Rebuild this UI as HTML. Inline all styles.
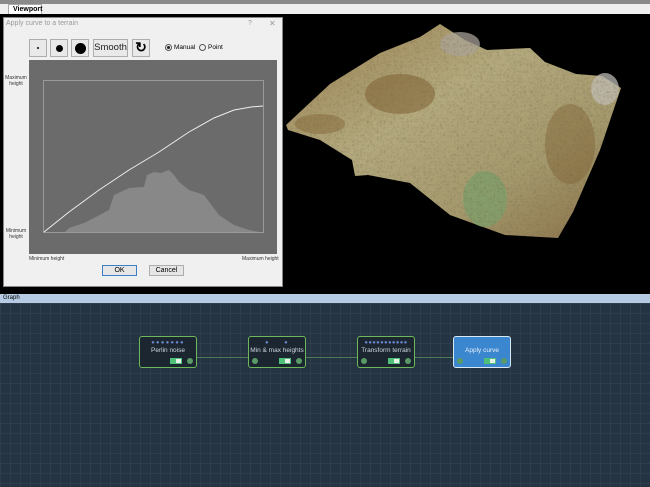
<!DOCTYPE html>
<html><head><style>
*{margin:0;padding:0;box-sizing:border-box}
body{width:650px;height:487px;overflow:hidden;background:#000;font-family:"Liberation Sans",sans-serif;position:relative}
.abs{position:absolute}
.btn{position:absolute;top:39px;height:18px;background:#e9e9e9;border:1px solid #adadad}
.node{position:absolute;top:336px;width:58px;height:32px;background:#1c2631;border:1.5px solid #6cb85a;border-radius:3px}
.node .t{position:absolute;top:10px;width:100%;text-align:center;color:#cfd6dc;font-size:6.5px}
.node .sw{position:absolute;left:30px;top:21px;width:12px;height:6px;background:#4fc07a}
.node .sw:after{content:"";position:absolute;right:1px;top:1px;width:5px;height:4px;background:#e8f0e8}
.node .pi{position:absolute;left:3px;top:21px;width:6px;height:6px;border-radius:50%;background:#5a9a66}
.node .po{position:absolute;right:3px;top:21px;width:6px;height:6px;border-radius:50%;background:#5a9a66}
.dots{position:absolute;top:3px;width:100%;text-align:center;color:#6a82c8;font-size:6px;letter-spacing:1.2px;line-height:6px}
</style></head><body>
<div class="abs" style="left:0;top:0;width:650px;height:4px;background:#8a8a8a"></div>
<div class="abs" style="left:0;top:4px;width:650px;height:10px;background:#efefef"></div>
<div class="abs" style="left:8px;top:4px;width:34px;height:10px;background:#fff;border:1px solid #aaa;border-bottom:none;font-size:7px;font-weight:bold;padding-left:4px;line-height:9px">Viewport</div>
<svg class="abs" style="left:0;top:14px" width="650" height="278">
<defs><linearGradient id="g" x1="0" y1="0" x2="1" y2="1"><stop offset="0" stop-color="#9a8050"/><stop offset="0.4" stop-color="#b8ae82"/><stop offset="0.7" stop-color="#a89c70"/><stop offset="1" stop-color="#8a7048"/></linearGradient>
<filter id="n"><feTurbulence baseFrequency="0.3" numOctaves="2" seed="3"/><feColorMatrix values="0 0 0 0 0.15  0 0 0 0 0.12  0 0 0 0 0.05  0 0 0 0.45 0"/><feComposite in2="SourceGraphic" operator="in"/></filter></defs>
<polygon points="286,111 330,70 380,39 420,23 440,10 465,26 487,36 530,34 545,48 576,60 602,62 621,74 600,136 573,198 558,224 505,221 450,201 410,169 368,161 355,162 352,146 320,126 288,116" fill="url(#g)"/>
<ellipse cx="485" cy="185" rx="22" ry="28" fill="#7fa36e" opacity="0.8"/>
<ellipse cx="460" cy="30" rx="20" ry="12" fill="#b0aaa0" opacity="0.7"/>
<ellipse cx="605" cy="75" rx="14" ry="16" fill="#c8c5c0" opacity="0.7"/>
<ellipse cx="400" cy="80" rx="35" ry="20" fill="#7a5a2a" opacity="0.5"/>
<ellipse cx="320" cy="110" rx="25" ry="10" fill="#7a5a2a" opacity="0.4"/>
<ellipse cx="570" cy="130" rx="25" ry="40" fill="#7a5a2a" opacity="0.4"/>
<polygon points="286,111 330,70 380,39 420,23 440,10 465,26 487,36 530,34 545,48 576,60 602,62 621,74 600,136 573,198 558,224 505,221 450,201 410,169 368,161 355,162 352,146 320,126 288,116" fill="#000" filter="url(#n)"/>
</svg>
<div class="abs" style="left:3px;top:17px;width:280px;height:270px;background:#f0f0f0;border:1px solid #888"></div>
<div class="abs" style="left:6px;top:20px;font-size:7px;color:#999">Apply curve to a terrain</div>
<div class="abs" style="left:248px;top:20px;font-size:7px;color:#999">?</div>
<div class="abs" style="left:269px;top:19px;font-size:8px;color:#999">✕</div>
<div class="btn" style="left:29px;width:18px"><div class="abs" style="left:7px;top:7px;width:2px;height:2px;background:#000;border-radius:50%"></div></div>
<div class="btn" style="left:50px;width:18px"><div class="abs" style="left:5px;top:5px;width:7px;height:7px;background:#000;border-radius:50%"></div></div>
<div class="btn" style="left:71px;width:18px"><div class="abs" style="left:3px;top:3px;width:11px;height:11px;background:#000;border-radius:50%"></div></div>
<div class="btn" style="left:93px;width:35px;font-size:9.5px;text-align:center;line-height:16px;color:#222">Smooth</div>
<div class="btn" style="left:132px;width:18px;font-size:14px;text-align:center;line-height:15px;font-weight:bold">↻</div>
<div class="abs" style="left:165px;top:44px;width:7px;height:7px;border:1px solid #555;border-radius:50%"><div class="abs" style="left:1px;top:1px;width:3px;height:3px;background:#222;border-radius:50%"></div></div>
<div class="abs" style="left:174px;top:44px;font-size:6.5px">Manual</div>
<div class="abs" style="left:199px;top:44px;width:7px;height:7px;border:1px solid #555;border-radius:50%"></div>
<div class="abs" style="left:208px;top:44px;font-size:6.5px">Point</div>
<div class="abs" style="left:5px;top:75px;width:22px;font-size:5px;text-align:center;color:#333">Maximum height</div>
<div class="abs" style="left:5px;top:228px;width:22px;font-size:5px;text-align:center;color:#333">Minimum height</div>
<svg class="abs" style="left:29px;top:60px" width="248" height="194">
<rect width="248" height="194" fill="#6b6b6b"/>
<rect x="14.5" y="20.5" width="220" height="152" fill="none" stroke="#999"/>
<path d="M36,172 L40,168 L55,163 L65,158 L80,150 L85,135 L100,128 L115,127 L118,115 L125,112 L132,113 L140,110 L145,115 L150,122 L160,130 L175,135 L190,155 L205,165 L220,170 L230,172 L36,172Z" fill="#888"/>
<path d="M15,172 L40,152 L70,130 L100,110 L130,92 L160,72 L185,58 L205,50 L222,47 L234,46" fill="none" stroke="#eee" stroke-width="1"/>
</svg>
<div class="abs" style="left:29px;top:256px;font-size:5px;color:#333">Minimum height</div>
<div class="abs" style="left:242px;top:256px;font-size:5px;color:#333">Maximum height</div>
<div class="abs" style="left:102px;top:265px;width:35px;height:11px;border:1px solid #3b7fc6;background:#e6e6e6;font-size:7px;text-align:center;line-height:9px">OK</div>
<div class="abs" style="left:149px;top:265px;width:35px;height:11px;border:1px solid #adadad;background:#e6e6e6;font-size:7px;text-align:center;line-height:9px">Cancel</div>
<div class="abs" style="left:0;top:294px;width:650px;height:9px;background:#b6cbe3;font-size:6px;padding-left:3px;line-height:9px">Graph</div>
<div class="abs" style="left:0;top:303px;width:650px;height:184px;background-color:#253442;background-image:linear-gradient(#2e3e4c 1px,transparent 1px),linear-gradient(90deg,#2e3e4c 1px,transparent 1px);background-size:10px 10px"></div>
<div class="abs" style="left:197px;top:357px;width:256px;height:1px;background:#4d7a55"></div>
<div class="node" style="left:139px"><div class="dots">●●●●●●●</div><div class="t">Perlin noise</div><div class="sw"></div><div class="po"></div></div>
<div class="node" style="left:248px"><div class="dots">●&nbsp;&nbsp;&nbsp;&nbsp;&nbsp;●</div><div class="t">Min &amp; max heights</div><div class="pi"></div><div class="sw"></div><div class="po"></div></div>
<div class="node" style="left:357px"><div class="dots" style="letter-spacing:0.3px">●●●●●●●●●●●</div><div class="t">Transform terrain</div><div class="pi"></div><div class="sw"></div><div class="po"></div></div>
<div class="node" style="left:453px;background:#3a86cf;border-color:#d8e8f5"><div class="t" style="color:#e8f0f8">Apply curve</div><div class="pi"></div><div class="sw"></div><div class="po"></div></div>
</body></html>
